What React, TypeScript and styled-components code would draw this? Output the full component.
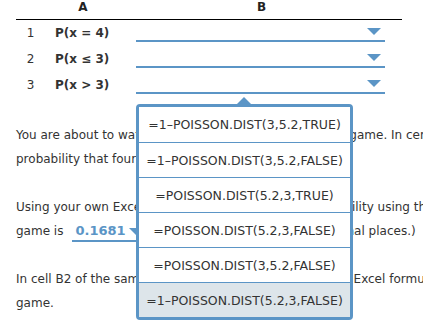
import React from "react"
import styled, { createGlobalStyle } from "styled-components"

const blue = "#5b95c6"
const ink = "#333"

const GlobalStyle = createGlobalStyle`
  html, body {
    margin: 0;
    padding: 0;
    background: #fff;
    overflow: hidden;
  }
  body {
    font-family: "DejaVu Sans", Verdana, sans-serif;
    font-size: 12px;
    color: ${ink};
  }
`

const Page = styled.div`
  width: 423px;
  height: 322px;
  overflow: hidden;
  padding-left: 16px;
  box-sizing: border-box;
`

const Sheet = styled.div`
  width: 386px;
  display: grid;
  grid-template-columns: 29px 76px 1fr;
`

const HeadCell = styled.div`
  height: 19px;
  line-height: 14px;
  font-weight: bold;
  text-align: center;
  color: #222;
  border-bottom: 1px solid #000;
`

const RowNum = styled.div`
  height: 26px;
  display: flex;
  align-items: center;
  justify-content: center;
`

const Label = styled.div`
  height: 26px;
  display: flex;
  align-items: center;
  padding-left: 10px;
  font-weight: bold;
  white-space: nowrap;
`

const AnswerCell = styled.div`
  height: 26px;
  display: flex;
  align-items: flex-end;
  padding: 0 17px 4px 15px;
  box-sizing: border-box;
`

const Select = styled.div`
  position: relative;
  flex: 1;
  height: 18px;
  display: flex;
  align-items: center;
  justify-content: flex-end;
  padding-right: 4px;
  border-bottom: 2px solid ${blue};
`

const Caret = styled.span`
  width: 0;
  height: 0;
  border-left: 7px solid transparent;
  border-right: 7px solid transparent;
  border-top: 7px solid ${blue};
`

const Menu = styled.ul`
  position: absolute;
  top: calc(100% + 12px);
  left: 0;
  z-index: 5;
  width: 211px;
  margin: 0;
  padding: 0;
  list-style: none;
  background: #fff;
  border: 3px solid ${blue};
  border-radius: 4px;

  &::before {
    content: "";
    position: absolute;
    top: -10px;
    left: 98px;
    border-left: 7px solid transparent;
    border-right: 7px solid transparent;
    border-bottom: 7px solid ${blue};
  }
`

const Option = styled.li<{ $active?: boolean }>`
  height: 34px;
  display: flex;
  align-items: center;
  justify-content: center;
  white-space: nowrap;
  font-size: 12.5px;
  color: ${ink};
  background: ${p => (p.$active ? "#dde5ea" : "#fff")};

  & + & {
    border-top: 1px solid ${blue};
  }
  &:first-child {
    height: 35px;
  }
`

const Para = styled.p`
  margin: 0 0 24px;
  line-height: 24px;
  white-space: nowrap;

  &:first-of-type {
    margin-top: 25px;
  }
`

const InlineSelect = styled.span`
  display: inline-flex;
  align-items: center;
  justify-content: space-between;
  width: 68px;
  height: 18px;
  margin-left: 9px;
  padding: 0 2px 0 3px;
  vertical-align: baseline;
  border-bottom: 2px solid ${blue};
  box-sizing: content-box;
  color: ${blue};
  font-weight: bold;
  font-size: 13px;
  line-height: 18px;
`

const options = [
  "=1–POISSON.DIST(3,5.2,TRUE)",
  "=1–POISSON.DIST(3,5.2,FALSE)",
  "=POISSON.DIST(5.2,3,TRUE)",
  "=POISSON.DIST(5.2,3,FALSE)",
  "=POISSON.DIST(3,5.2,FALSE)",
  "=1–POISSON.DIST(5.2,3,FALSE)",
]

const rows = [
  { n: 1, label: "P(x = 4)" },
  { n: 2, label: "P(x ≤ 3)" },
  { n: 3, label: "P(x > 3)", open: true },
]

export default function App() {
  return (
    <Page>
      <GlobalStyle />
      <Sheet>
        <HeadCell />
        <HeadCell>A</HeadCell>
        <HeadCell>B</HeadCell>
        {rows.map(r => (
          <React.Fragment key={r.n}>
            <RowNum>{r.n}</RowNum>
            <Label>{r.label}</Label>
            <AnswerCell>
              <Select>
                <Caret />
                {r.open && (
                  <Menu>
                    {options.map((o, i) => (
                      <Option key={o} $active={i === options.length - 1}>{o}</Option>
                    ))}
                  </Menu>
                )}
              </Select>
            </AnswerCell>
          </React.Fragment>
        ))}
      </Sheet>
      <Para>
        You are about to watch a major professional basketball game. In certain leagues, the average
        <br />
        probability that four goals are scored in a game.
      </Para>
      <Para>
        Using your own Excel worksheet, determine this probability using the Poisson function for the
        <br />
        game is
        <InlineSelect>
          0.1681
          <Caret />
        </InlineSelect>{" "}
        (Round your answer to four decimal places.)
      </Para>
      <Para>
        In cell B2 of the same worksheet, enter the appropriate Excel formula for the
        <br />
        game.
      </Para>
    </Page>
  )
}
